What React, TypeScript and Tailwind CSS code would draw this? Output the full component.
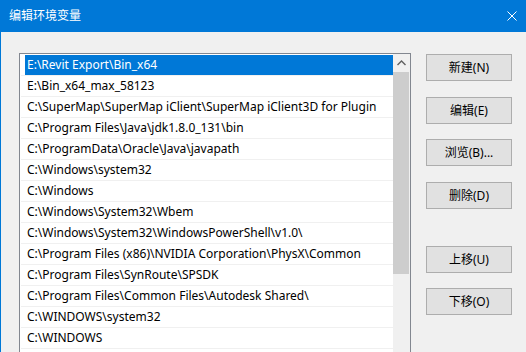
import React from "react";

const paths = [
  "E:\\Revit Export\\Bin_x64",
  "E:\\Bin_x64_max_58123",
  "C:\\SuperMap\\SuperMap iClient\\SuperMap iClient3D for Plugin",
  "C:\\Program Files\\Java\\jdk1.8.0_131\\bin",
  "C:\\ProgramData\\Oracle\\Java\\javapath",
  "C:\\Windows\\system32",
  "C:\\Windows",
  "C:\\Windows\\System32\\Wbem",
  "C:\\Windows\\System32\\WindowsPowerShell\\v1.0\\",
  "C:\\Program Files (x86)\\NVIDIA Corporation\\PhysX\\Common",
  "C:\\Program Files\\SynRoute\\SPSDK",
  "C:\\Program Files\\Common Files\\Autodesk Shared\\",
  "C:\\WINDOWS\\system32",
  "C:\\WINDOWS",
];

function Btn({ label, className }: { label: string; className?: string }) {
  return (
    <div
      className={
        "h-[27px] w-[86px] shrink-0 border border-[#adadad] bg-[#e1e1e1] flex items-center justify-center text-[12px] text-black " +
        (className ?? "")
      }
    >
      {label}
    </div>
  );
}

export default function App() {
  const selected = 0;

  return (
    <div className="w-[526px] h-[352px] overflow-hidden bg-[#f0f0f0] border-l border-[#0078d7] font-['Noto_Sans','Noto_Sans_CJK_SC',sans-serif]">
      {/* title bar */}
      <div className="h-[32px] bg-[#0078d7] flex items-center justify-between pl-[8px] pr-[9px] text-white text-[12px]">
        <span>编辑环境变量</span>
        <svg width="10" height="10" viewBox="0 0 10 10" className="block">
          <path d="M0.5 0.5 L9.5 9.5 M9.5 0.5 L0.5 9.5" stroke="#fff" strokeWidth="1" />
        </svg>
      </div>

      <div className="flex pl-[18px] pt-[21px]">
        {/* path list */}
        <div className="w-[392px] h-[320px] shrink-0 border border-[#828790] bg-white flex">
          <div className="flex-1 pt-[1px] overflow-hidden">
            {paths.map((p, i) => (
              <div key={i} className="ml-[1px] h-[21px] border-b border-[#f0f0f0]">
                <div
                  className={
                    "ml-[4px] h-[20px] pl-[2px] leading-[20px] text-[12px] whitespace-nowrap overflow-hidden " +
                    (i === selected ? "bg-[#0078d7] text-white" : "text-black")
                  }
                >
                  {p}
                </div>
              </div>
            ))}
          </div>
          {/* scrollbar */}
          <div className="w-[17px] shrink-0 bg-[#f0f0f0] flex flex-col">
            <div className="h-[17px] flex items-center justify-center">
              <svg width="9" height="6" viewBox="0 0 9 6" className="block">
                <path d="M0.5 5 L4.5 1 L8.5 5" stroke="#606060" strokeWidth="1.4" fill="none" />
              </svg>
            </div>
            <div className="mt-[1px] h-[202px] w-[16px] bg-[#cdcdcd]" />
          </div>
        </div>

        {/* buttons */}
        <div className="ml-[15px] pt-[1px] flex flex-col">
          <Btn label="新建(N)" />
          <Btn label="编辑(E)" className="mt-[16px]" />
          <Btn label="浏览(B)..." className="mt-[15px]" />
          <Btn label="删除(D)" className="mt-[16px]" />
          <Btn label="上移(U)" className="mt-[37px]" />
          <Btn label="下移(O)" className="mt-[15px]" />
        </div>
      </div>
    </div>
  );
}
